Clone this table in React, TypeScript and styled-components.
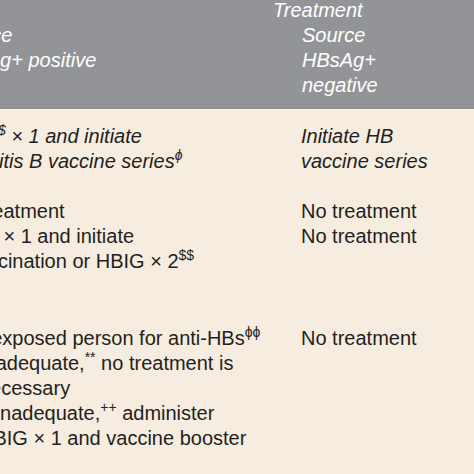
import styled, { createGlobalStyle } from "styled-components";

const GlobalStyle = createGlobalStyle`
  html, body {
    margin: 0;
    padding: 0;
    background: #f6ece0;
    overflow: hidden;
  }
  body {
    font-family: "Liberation Sans", Arial, sans-serif;
  }
`;

const LEFT_COL = 352;

const Table = styled.div`
  margin-left: -51px;
  margin-top: -2px;
  width: 525px;
  font-size: 20px;
  line-height: 25px;
  color: #231f20;
`;

const Header = styled.div`
  background: #939497;
  color: #ffffff;
  font-style: italic;
  padding-bottom: 10px;
  border-bottom: 1px solid #8a8b8e;
`;

const SpanTitle = styled.div`
  padding-left: 324px;
`;

const Grid = styled.div<{ $gap?: number }>`
  display: grid;
  grid-template-columns: ${LEFT_COL}px 1fr;
  margin-bottom: ${(p) => p.$gap ?? 0}px;
`;

const Cell = styled.div<{ $italic?: boolean; $indent?: number }>`
  font-style: ${(p) => (p.$italic ? "italic" : "normal")};
  padding-left: ${(p) => p.$indent ?? 0}px;
  white-space: nowrap;
`;

const Line = styled.div``;

const Sup = styled.sup`
  font-size: 14px;
  line-height: 0;
  vertical-align: 8px;
`;

const Divider = styled.div`
  height: 1px;
  background: #fbf7f1;
`;

const Body = styled.div`
  padding-top: 14px;
  padding-bottom: 40px;
`;

const ListItem = styled.div`
  display: grid;
  grid-template-columns: 30px 1fr;
`;

export default function App() {
  return (
    <>
      <GlobalStyle />
      <Table>
        <Header>
          <SpanTitle>Treatment</SpanTitle>
          <Grid>
            <Cell $italic>
              <Line>Source</Line>
              <Line>HBsAg+ positive</Line>
            </Cell>
            <Cell $italic $indent={1}>
              <Line>Source</Line>
              <Line>HBsAg+</Line>
              <Line>negative</Line>
            </Cell>
          </Grid>
        </Header>
        <Divider />
        <Body>
          <Grid $gap={25}>
            <Cell $italic>
              <Line>
                HBIG<Sup>$</Sup> × 1 and initiate
              </Line>
              <Line>
                hepatitis B vaccine series<Sup>ϕ</Sup>
              </Line>
            </Cell>
            <Cell $italic>
              <Line>Initiate HB</Line>
              <Line>vaccine series</Line>
            </Cell>
          </Grid>
          <Grid $gap={52}>
            <Cell>
              <Line>No treatment</Line>
              <Line>HBIG × 1 and initiate</Line>
              <Line>
                revaccination or HBIG × 2<Sup>$$</Sup>
              </Line>
            </Cell>
            <Cell>
              <Line>No treatment</Line>
              <Line>No treatment</Line>
            </Cell>
          </Grid>
          <Grid>
            <Cell>
              <Line>
                Test exposed person for anti-HBs<Sup>ϕϕ</Sup>
              </Line>
              <ListItem>
                <span>1.</span>
                <div>
                  <Line>
                    If adequate,<Sup>**</Sup> no treatment is
                  </Line>
                  <Line>necessary</Line>
                </div>
              </ListItem>
              <ListItem>
                <span>2.</span>
                <div>
                  <Line>
                    If inadequate,<Sup>++</Sup> administer
                  </Line>
                  <Line>HBIG × 1 and vaccine booster</Line>
                </div>
              </ListItem>
            </Cell>
            <Cell>
              <Line>No treatment</Line>
            </Cell>
          </Grid>
        </Body>
      </Table>
    </>
  );
}
